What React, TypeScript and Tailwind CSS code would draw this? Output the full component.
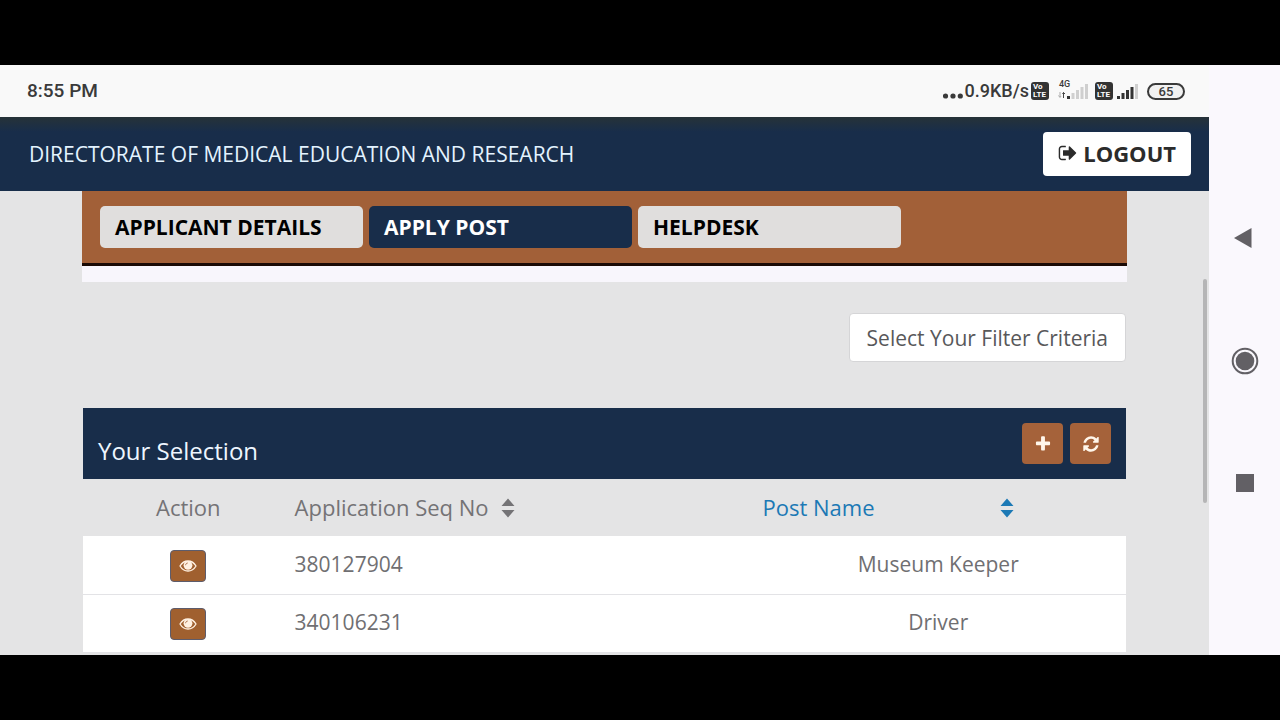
import { useState } from "react"

interface Selection {
  seqNo: string;
  postName: string;
}

const selections: Selection[] = [
  { seqNo: "380127904", postName: "Museum Keeper" },
  { seqNo: "340106231", postName: "Driver" },
]

const tabs = ["APPLICANT DETAILS", "APPLY POST", "HELPDESK"]

const icons = {
  signOut: "M704 1440q0 4 1 20t.5 26.5-3 23.5-10 19.5-20.5 6.5h-320q-119 0-203.5-84.5t-84.5-203.5v-704q0-119 84.5-203.5t203.5-84.5h320q13 0 22.5 9.5t9.5 22.5q0 4 1 20t.5 26.5-3 23.5-10 19.5-20.5 6.5h-320q-66 0-113 47t-47 113v704q0 66 47 113t113 47h312l11.5 1 11.5 3 8 5.5 7 9 2 13.5zm928-544q0 26-19 45l-544 544q-19 19-45 19t-45-19-19-45v-288h-448q-26 0-45-19t-19-45v-384q0-26 19-45t45-19h448v-288q0-26 19-45t45-19 45 19l544 544q19 19 19 45z",
  refresh: "M1639 1056q0 5-1 7-64 268-268 434.5t-478 166.5q-146 0-282.5-55t-243.5-157l-129 129q-19 19-45 19t-45-19-19-45v-448q0-26 19-45t45-19h448q26 0 45 19t19 45-19 45l-137 137q71 66 161 102t187 36q134 0 250-65t186-179q11-17 53-117 8-23 30-23h192q13 0 22.5 9.5t9.5 22.5zm25-800v448q0 26-19 45t-45 19h-448q-26 0-45-19t-19-45 19-45l138-138q-148-137-349-137-134 0-250 65t-186 179q-11 17-53 117-8 23-30 23h-199q-13 0-22.5-9.5t-9.5-22.5v-7q65-268 270-434.5t480-166.5q146 0 284 55.5t245 156.5l130-129q19-19 45-19t45 19 19 45z",
  plus: "M1600 736v192q0 40-28 68t-68 28h-416v416q0 40-28 68t-68 28h-192q-40 0-68-28t-28-68v-416h-416q-40 0-68-28t-28-68v-192q0-40 28-68t68-28h416v-416q0-40 28-68t68-28h192q40 0 68 28t28 68v416h416q40 0 68 28t28 68z",
}

const Icon = ({ name, className }: { name: keyof typeof icons; className: string }) => (
  <svg viewBox="0 0 1792 1792" fill="currentColor" className={className} aria-hidden="true">
    <path d={icons[name]} />
  </svg>
)

const EyeIcon = () => (
  <svg viewBox="0 0 18 12" className="w-[18px] h-3" aria-hidden="true">
    <path d="M1 6C3 2.6 5.8 1 9 1s6 1.600 8 5c-2 3.400-4.800 5-8 5S3 9.400 1 6z" fill="none" stroke="#fff1e2" strokeWidth="1.300" />
    <circle cx="9" cy="5.300" r="4.400" fill="#fff1e2" />
    <path d="M6.600 5.200C6.700 3.900 7.500 3.100 8.700 3" fill="none" stroke="#a0623a" strokeWidth=".9" />
  </svg>
)

const SortIcon = () => (
  <svg viewBox="0 0 14 20" fill="currentColor" className="w-3.5 h-5" aria-hidden="true">
    <path d="M7 .5l6.500 7.500H.5zM7 19.500l6.500-7.500H.5z" />
  </svg>
)

const VolteBadge = () => (
  <span className="flex h-[18px] w-[18px] flex-col justify-center rounded-[3px] bg-[#333] pl-0.5 font-['Roboto',sans-serif] text-[8px] leading-[8px] font-bold text-white">
    <span>Vo</span>
    <span>LTE</span>
  </span>
)

const SignalIcon = ({ filled }: { filled: number }) => (
  <svg viewBox="0 0 22 16" className="h-4 w-[22px]" aria-hidden="true">
    {[3, 6, 9, 12, 15].map((height, index) => (
      <rect
        key={height}
        x={index * 4.500}
        y={16 - height}
        width={3}
        height={height}
        fill={index < filled ? "#333" : "#cfcfcf"}
      />
    ))}
  </svg>
)

const StatusBar = () => (
  <div className="flex h-[52px] items-center justify-between bg-[#f9f9f9] pr-6 pl-[27px] font-['Roboto',sans-serif] font-medium text-[#3a3a3a]">
    <span className="text-[19px]">8:55 PM</span>
    <div className="flex items-center">
      <svg viewBox="0 0 20 6" fill="currentColor" className="mt-2.5 mr-0.5 h-1.5 w-5" aria-hidden="true">
        <circle cx="2.500" cy="3" r="2.600" />
        <circle cx="10" cy="3" r="2.600" />
        <circle cx="17.300" cy="3" r="2.600" />
      </svg>
      <span className="mr-0.5 text-lg">0.9KB/s</span>
      <VolteBadge />
      <div className="relative mr-1.5 ml-2 flex items-end">
        <span className="absolute -top-1 left-0.5 text-[9px] leading-[10px]">4G</span>
        <svg viewBox="0 0 8 8" className="h-2 w-2.5" aria-hidden="true">
          <path d="M2 1v5M.5 4.500L2 6.500l1-1.500" fill="none" stroke="#aaa" />
          <path d="M5.500 7V1.500M4.500 3l1-1.500L7 3" fill="none" stroke="#444" />
        </svg>
        <SignalIcon filled={1} />
      </div>
      <VolteBadge />
      <div className="mr-2 ml-1">
        <SignalIcon filled={4} />
      </div>
      <span className="flex h-[17px] w-[38px] items-center justify-center rounded-full border-2 border-[#3a3a3a] bg-[#f1f1f1] text-[13px] leading-none">
        65
      </span>
    </div>
  </div>
)

const SystemNav = () => (
  <aside className="flex w-[71px] shrink-0 flex-col items-center justify-center gap-[99px] bg-[#faf8fd] text-[#626065]">
    <button aria-label="Back" className="-ml-1">
      <svg viewBox="0 0 18 20" fill="currentColor" className="h-5 w-[18px]">
        <path d="M0 10L17.500 0v20z" />
      </svg>
    </button>
    <button aria-label="Home">
      <svg viewBox="0 0 28 28" className="size-7">
        <circle cx="14" cy="14" r="12.300" fill="none" stroke="currentColor" strokeWidth="2" />
        <circle cx="14" cy="14" r="9.300" fill="currentColor" />
      </svg>
    </button>
    <button aria-label="Recent apps">
      <svg viewBox="0 0 18 18" fill="currentColor" className="size-[18px]">
        <path d="M0 0h18v18H0z" />
      </svg>
    </button>
  </aside>
)

const App = () => {
  const [activeTab, setActiveTab] = useState("APPLY POST")

  return (
    <div className="min-h-screen bg-black py-[65px] font-['Open_Sans',sans-serif]">
      <div className="flex">
        <div className="relative min-w-0 flex-1 bg-[#e4e4e5]">
          <StatusBar />

          <header className="flex h-[74px] items-center justify-between bg-linear-to-b from-[#263238] to-[#182d4a] to-20% pr-[18px] pl-[29px]">
            <h1 className="pt-0.5 text-[21px] text-[#e3f3ff]">DIRECTORATE OF MEDICAL EDUCATION AND RESEARCH</h1>
            <button className="flex h-11 items-center gap-[5px] rounded-[4px] bg-white px-[15px] pb-0.5 text-[22px] font-bold text-[#2b2b2b]">
              <Icon name="signOut" className="size-5" />
              LOGOUT
            </button>
          </header>

          <main className="px-[82px]">
            <nav className="flex h-[75px] gap-1.5 border-b-[3px] border-[#1a0a05] bg-[#a26038] px-[18px] pt-[15px]">
              {tabs.map((tab) => (
                <button
                  key={tab}
                  onClick={() => setActiveTab(tab)}
                  className={`h-[42px] w-[263px] rounded-[5px] px-[15px] pt-0.5 text-left text-[21px] font-bold ${
                    tab === activeTab ? "bg-[#182d4a] text-white" : "bg-[#e0dedd] text-black"
                  }`}
                >
                  {tab}
                </button>
              ))}
            </nav>
            <div className="h-4 bg-[#f8f6fc]" />

            <div className="mx-px flex justify-end pt-[31px] pb-[46px]">
              <button className="h-[49px] rounded-[4px] border border-[#d5d5d7] bg-white px-[17px] pt-0.5 text-[21px] text-[#58585a]">
                Select Your Filter Criteria
              </button>
            </div>

            {/* Selected posts */}
            <section className="mx-px pb-0.5">
              <div className="flex h-[71px] items-center justify-between bg-[#182d4a] px-[15px]">
                <h2 className="pt-3.5 text-2xl text-[#eef6ff]">Your Selection</h2>
                <div className="flex gap-[7px] text-[#fff6ea]">
                  <button aria-label="Add" className="flex size-[41px] items-center justify-center rounded-[4px] bg-[#a5623a]">
                    <Icon name="plus" className="size-[18px]" />
                  </button>
                  <button aria-label="Refresh" className="flex size-[41px] items-center justify-center rounded-[4px] bg-[#a5623a]">
                    <Icon name="refresh" className="size-[18px]" />
                  </button>
                </div>
              </div>

              <table className="w-full table-fixed text-[21px] text-[#706f72]">
                <thead>
                  <tr className="h-[57px] text-[22px] text-[#747376]">
                    <th className="w-[20%] pl-0.5 font-normal">Action</th>
                    <th className="w-[44%] px-[3px] text-left font-normal">
                      <span className="flex items-center gap-3">
                        Application Seq No
                        <SortIcon />
                      </span>
                    </th>
                    <th className="w-[36%] pr-[112px] pl-3 font-normal text-[#1c79b5]">
                      <span className="flex items-center justify-between">
                        Post Name
                        <SortIcon />
                      </span>
                    </th>
                  </tr>
                </thead>
                <tbody className="bg-white">
                  {selections.map((selection) => (
                    <tr key={selection.seqNo} className="h-[58px] border-b border-[#e3e3e6]">
                      <td className="pt-0.5 pl-0.5">
                        <button
                          aria-label={`View ${selection.postName}`}
                          className="mx-auto flex h-8 w-9 items-center justify-center rounded-[4px] border border-[#5d5c6c] bg-[#a0602f]"
                        >
                          <EyeIcon />
                        </button>
                      </td>
                      <td className="px-[3px]">{selection.seqNo}</td>
                      <td className="text-center">{selection.postName}</td>
                    </tr>
                  ))}
                </tbody>
              </table>
            </section>
          </main>

          {/* Scroll thumb */}
          <div className="absolute top-[214px] right-0.5 h-56 w-1 rounded-full bg-[#b5b5b6]" />
        </div>
        <SystemNav />
      </div>
    </div>
  )
}

export default App
